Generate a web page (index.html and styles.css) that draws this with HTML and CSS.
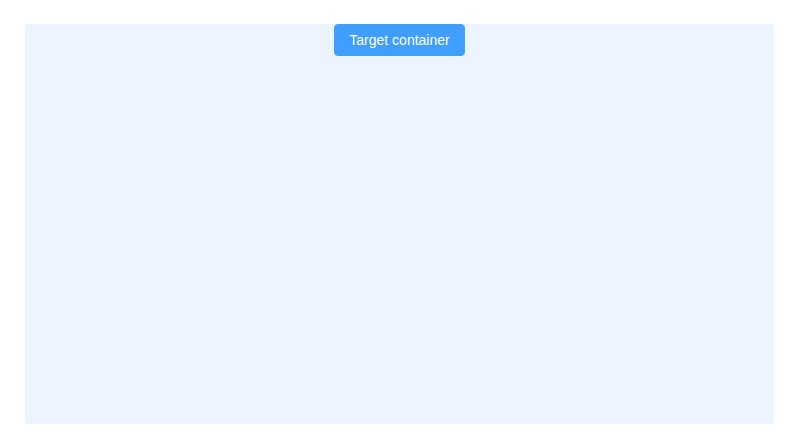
FILE: index.html
```html
<!DOCTYPE html>
<html>
<head>
<meta charset="utf-8">
<link rel="stylesheet" href="styles.css">
</head>
<body>
<div class="page">
  <div class="target">
    <button class="btn">Target container</button>
  </div>
</div>
</body>
</html>
```

FILE: styles.css
```css
html, body {
  margin: 0;
  padding: 0;
  background: #fff;
  font-family: "Liberation Sans", Arial, sans-serif;
}
.page {
  padding: 24px 23px 0 25px;
}
.target {
  height: 400px;
  background: #ecf5ff;
  border-radius: 4px;
  display: flex;
  justify-content: center;
  align-items: flex-start;
}
.btn {
  height: 32px;
  padding: 0 14.5px;
  background: #409eff;
  border: 1px solid #409eff;
  border-radius: 4px;
  color: #fff;
  font-family: "Liberation Sans", Arial, sans-serif;
  font-size: 14px;
  line-height: 1;
  cursor: pointer;
}
```
